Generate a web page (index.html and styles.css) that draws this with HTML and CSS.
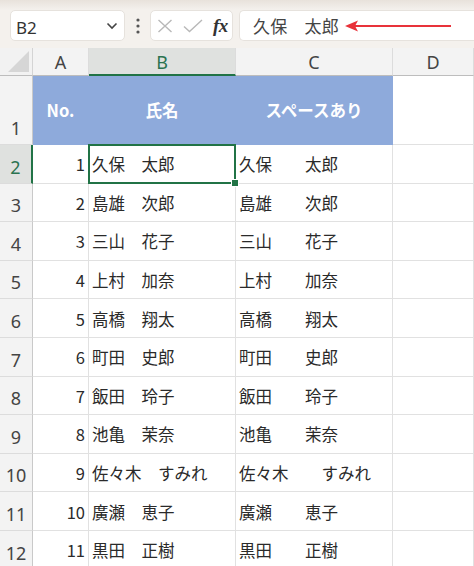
FILE: index.html
```html
<!DOCTYPE html>
<html lang="ja">
<head>
<meta charset="utf-8">
<link rel="stylesheet" href="styles.css">
</head>
<body>
<div class="app">
  <div class="toolbar">
    <div class="namebox">
      <span class="name">B2</span>
      <svg class="chev" width="12" height="8" viewBox="0 0 12 8"><path d="M1.5 1.5 L6 6 L10.5 1.5" fill="none" stroke="#444" stroke-width="1.6"/></svg>
    </div>
    <div class="dots">
      <svg width="4" height="16" viewBox="0 0 4 16"><circle cx="2" cy="2" r="1.6" fill="#555"/><circle cx="2" cy="8" r="1.6" fill="#555"/><circle cx="2" cy="14" r="1.6" fill="#555"/></svg>
    </div>
    <div class="fxbox">
      <svg class="ic" width="16" height="14" viewBox="0 0 16 14"><path d="M1.5 1 L14.5 13 M14.5 1 L1.5 13" stroke="#b8b8b8" stroke-width="1.4" fill="none"/></svg>
      <svg class="ic" width="20" height="14" viewBox="0 0 20 14"><path d="M1 7.5 L6.5 12.5 L19 1" stroke="#b8b8b8" stroke-width="1.4" fill="none"/></svg>
      <span class="fx">fx</span>
    </div>
    <div class="formula">
      <span class="ftext">久保　太郎</span>
      <svg class="arrow" width="106" height="14" viewBox="0 0 106 14"><path d="M10 7 L106 7" stroke="#e8323a" stroke-width="2.2"/><path d="M0 7 L13 1.5 L10 7 L13 12.5 Z" fill="#e8323a"/></svg>
    </div>
  </div>
  <div class="sheet">
    <div class="corner"><span class="tri"></span></div>
    <div class="ch">A</div>
    <div class="ch ch-sel">B</div>
    <div class="ch">C</div>
    <div class="ch">D</div>

    <div class="rh rh-tall">1</div>
    <div class="c hd">No.</div>
    <div class="c hd">氏名</div>
    <div class="c hd">スペースあり</div>
    <div class="c"></div>

    <div class="rh rh-sel">2</div>
    <div class="c num">1</div>
    <div class="c sel">久保　太郎<span class="handle"></span></div>
    <div class="c">久保　　太郎</div>
    <div class="c"></div>

    <div class="rh">3</div>
    <div class="c num">2</div>
    <div class="c">島雄　次郎</div>
    <div class="c">島雄　　次郎</div>
    <div class="c"></div>

    <div class="rh">4</div>
    <div class="c num">3</div>
    <div class="c">三山　花子</div>
    <div class="c">三山　　花子</div>
    <div class="c"></div>

    <div class="rh">5</div>
    <div class="c num">4</div>
    <div class="c">上村　加奈</div>
    <div class="c">上村　　加奈</div>
    <div class="c"></div>

    <div class="rh">6</div>
    <div class="c num">5</div>
    <div class="c">高橋　翔太</div>
    <div class="c">高橋　　翔太</div>
    <div class="c"></div>

    <div class="rh">7</div>
    <div class="c num">6</div>
    <div class="c">町田　史郎</div>
    <div class="c">町田　　史郎</div>
    <div class="c"></div>

    <div class="rh">8</div>
    <div class="c num">7</div>
    <div class="c">飯田　玲子</div>
    <div class="c">飯田　　玲子</div>
    <div class="c"></div>

    <div class="rh">9</div>
    <div class="c num">8</div>
    <div class="c">池亀　茉奈</div>
    <div class="c">池亀　　茉奈</div>
    <div class="c"></div>

    <div class="rh">10</div>
    <div class="c num">9</div>
    <div class="c">佐々木　すみれ</div>
    <div class="c">佐々木　　すみれ</div>
    <div class="c"></div>

    <div class="rh">11</div>
    <div class="c num">10</div>
    <div class="c">廣瀬　恵子</div>
    <div class="c">廣瀬　　恵子</div>
    <div class="c"></div>

    <div class="rh">12</div>
    <div class="c num">11</div>
    <div class="c">黒田　正樹</div>
    <div class="c">黒田　　正樹</div>
    <div class="c"></div>
  </div>
</div>
</body>
</html>
```
FILE: styles.css
```css
html, body {
  margin: 0;
  padding: 0;
}
body {
  width: 474px;
  height: 566px;
  overflow: hidden;
  background: #ffffff;
  font-family: "Noto Sans CJK JP", "Noto Sans", sans-serif;
}
.app {
  width: 474px;
  height: 566px;
  overflow: hidden;
}
.toolbar {
  height: 48px;
  box-sizing: border-box;
  padding-top: 10px;
  display: flex;
  align-items: flex-start;
  background: linear-gradient(to bottom, #e8e2db 0px, #efebe6 6px, #f4f1ed 10px, #f4f1ed 100%);
  overflow: hidden;
}
.namebox {
  flex: none;
  margin-left: 10px;
  width: 115px;
  height: 31px;
  box-sizing: border-box;
  background: #fff;
  border: 1px solid #e6e2dd;
  border-radius: 5px;
  display: flex;
  align-items: center;
  justify-content: space-between;
  padding: 0 6px 0 5px;
}
.name {
  font-family: "Noto Sans", sans-serif;
  font-size: 17px;
  color: #333;
  padding-top: 3px;
}
.chev {
  margin-top: 1px;
}
.dots {
  flex: none;
  width: 25px;
  height: 31px;
  display: flex;
  align-items: center;
  justify-content: center;
}
.fxbox {
  flex: none;
  width: 83px;
  height: 31px;
  box-sizing: border-box;
  background: #fff;
  border: 1px solid #e6e2dd;
  border-radius: 5px;
  display: flex;
  align-items: center;
  padding-left: 6px;
  gap: 10px;
}
.fx {
  font-family: "Liberation Serif", "DejaVu Serif", serif;
  font-style: italic;
  font-weight: bold;
  font-size: 19px;
  color: #333;
  letter-spacing: -0.5px;
}
.formula {
  margin-left: 6px;
  width: 260px;
  flex: none;
  height: 31px;
  box-sizing: border-box;
  background: #fff;
  border: 1px solid #e6e2dd;
  border-right: none;
  border-radius: 5px 0 0 5px;
  display: flex;
  align-items: center;
  padding-left: 13px;
}
.ftext {
  font-size: 17px;
  color: #444;
  white-space: pre;
  letter-spacing: 0.2px;
}
.arrow {
  margin-left: 6px;
}
.sheet {
  display: grid;
  grid-template-columns: 33px 56px 147px 157px 81px;
  grid-template-rows: 28px 69px repeat(11, 38.6px);
}
.corner {
  background: #f2f2f2;
  border-right: 1px solid #d4d4d4;
  border-bottom: 1px solid #bdbdbd;
  position: relative;
}
.tri {
  position: absolute;
  right: 3px;
  bottom: 3px;
  width: 0;
  height: 0;
  border-style: solid;
  border-width: 0 0 21px 21px;
  border-color: transparent transparent #d6d6d6 transparent;
}
.ch {
  background: #f3f3f3;
  border-right: 1px solid #dcdcdc;
  border-bottom: 1px solid #bdbdbd;
  display: flex;
  align-items: center;
  justify-content: center;
  font-family: "Noto Sans", sans-serif;
  font-size: 18px;
  color: #444;
  padding-top: 1px;
  box-sizing: border-box;
}
.ch-sel {
  background: #dfe1df;
  color: #2b7350;
  border-bottom: 2px solid #217346;
}
.rh {
  background: #f3f3f3;
  border-right: 1px solid #c9c9c9;
  border-bottom: 1px solid #dcdcdc;
  display: flex;
  align-items: flex-end;
  justify-content: center;
  font-family: "Noto Sans", sans-serif;
  font-size: 18px;
  line-height: 22px;
  color: #444;
  padding-bottom: 5px;
  box-sizing: border-box;
}
.rh-sel {
  background: #dfe1df;
  color: #2b7350;
  border-right: 2px solid #217346;
}
.c {
  border-right: 1px solid #e1e1e1;
  border-bottom: 1px solid #e1e1e1;
  display: flex;
  align-items: center;
  padding: 0 3px;
  font-size: 16.5px;
  color: #2a2a2a;
  white-space: pre;
  box-sizing: border-box;
  padding-top: 1px;
}
.hd {
  background: #8eaadb;
  border-right-color: #8eaadb;
  border-bottom-color: #8eaadb;
  color: #fff;
  font-weight: bold;
  justify-content: center;
  font-size: 16.5px;
  padding-top: 0;
}
.num {
  justify-content: flex-end;
}
.sel {
  position: relative;
}
.sel::after {
  content: "";
  position: absolute;
  left: -1px;
  top: -1px;
  right: -1px;
  bottom: -1px;
  border: 2px solid #217346;
}
.handle {
  position: absolute;
  right: -4px;
  bottom: -4px;
  width: 6px;
  height: 6px;
  background: #217346;
  border: 1px solid #fff;
  z-index: 2;
}
```
